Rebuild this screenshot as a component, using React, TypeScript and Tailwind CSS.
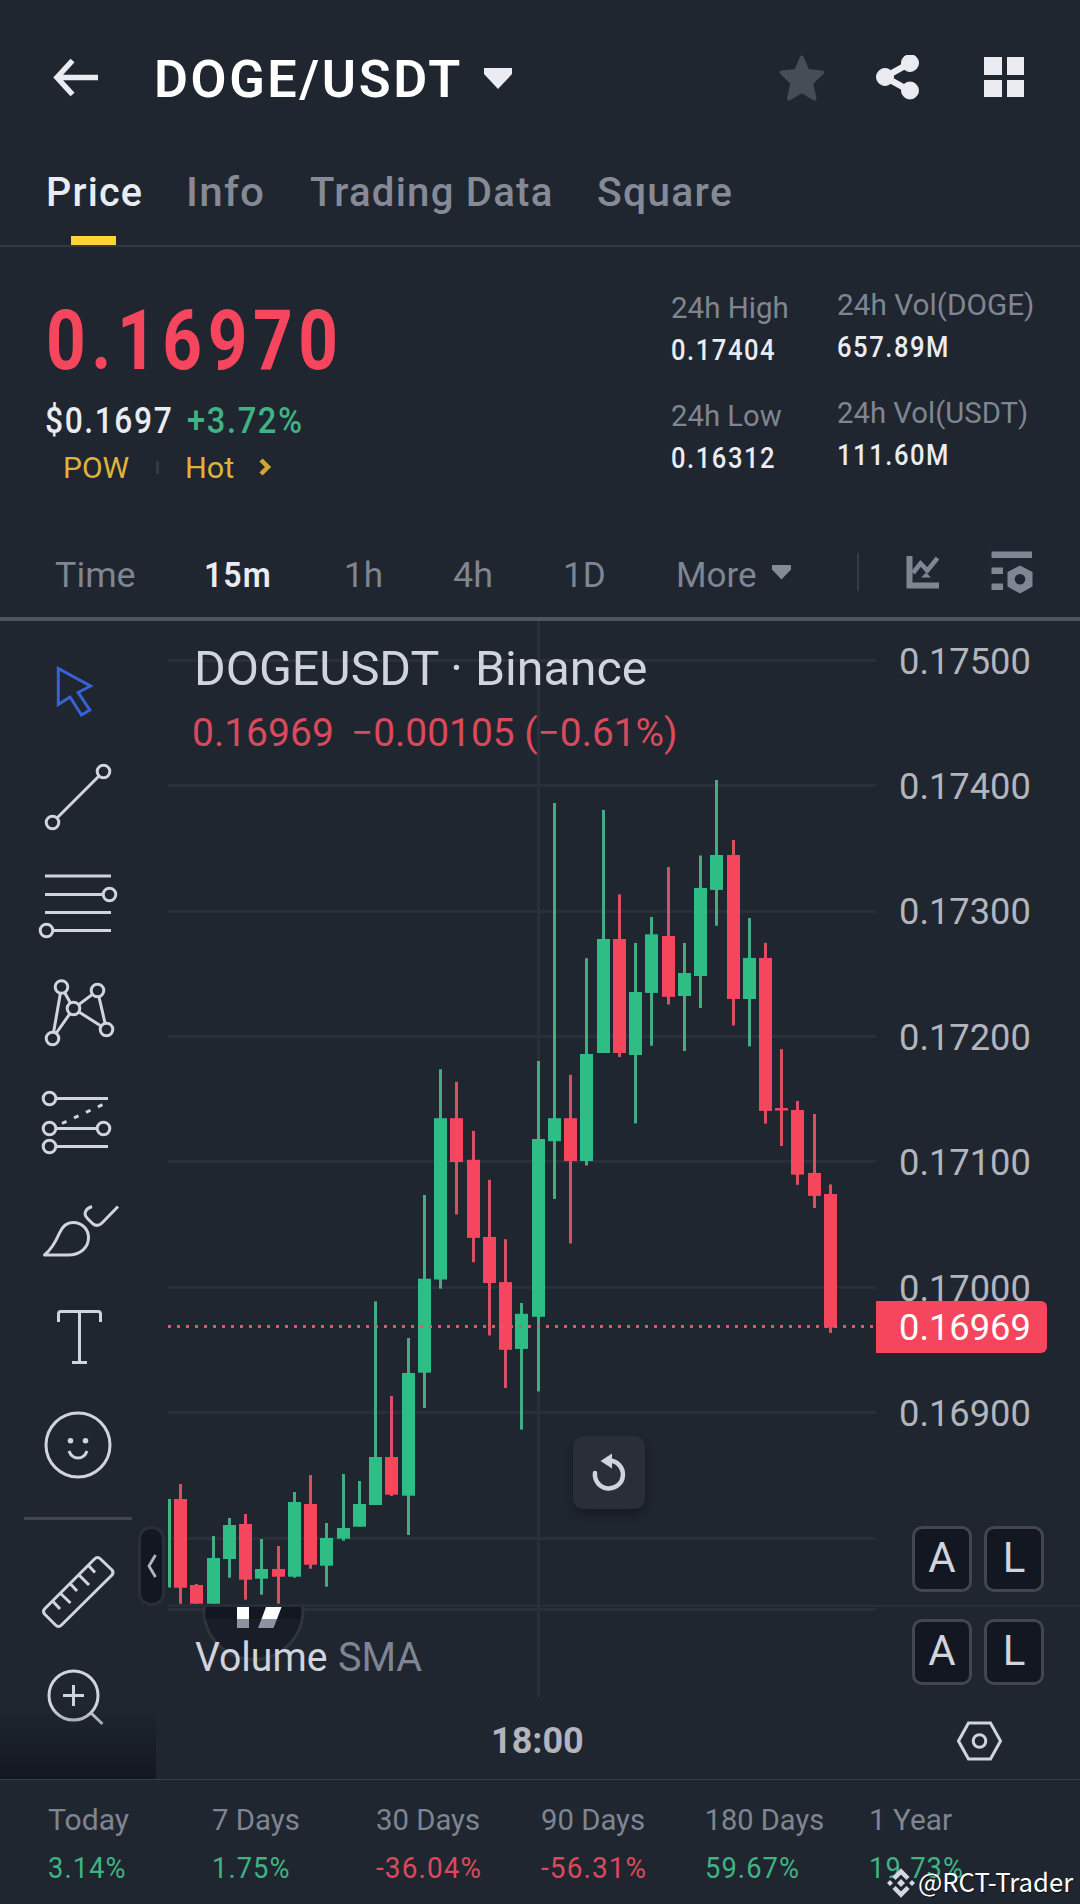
import { useLayoutEffect, useRef, useState } from "react";
import type { ReactNode } from "react";

/** Single line of text condensed or widened horizontally to an exact width. */
function Fit({ w, className = "", children }: { w: number; className?: string; children: ReactNode }) {
  const ref = useRef<HTMLSpanElement>(null);
  const [scale, setScale] = useState(1);
  useLayoutEffect(() => {
    if (ref.current) setScale(w / ref.current.offsetWidth);
  }, [w]);
  return (
    <span className={"block shrink-0 whitespace-nowrap " + className} style={{ width: w }}>
      <span ref={ref} className="inline-block origin-left" style={{ transform: `translateY(1px) scaleX(${scale})` }}>
        {children}
      </span>
    </span>
  );
}

type Candle = [x: number, high: number, top: number, bottom: number, low: number, up: 0 | 1];

const candles: Candle[] = [
  [180.5, 1484, 1499, 1587.7, 1603.7, 0],
  [196.5, 1584, 1585, 1603.7, 1603.7, 0],
  [213.5, 1536, 1558, 1603.7, 1603.7, 1],
  [229.5, 1518, 1525, 1559, 1577.7, 1],
  [245.5, 1514, 1524, 1579.7, 1599.7, 0],
  [261.5, 1539, 1569, 1578.7, 1594.7, 1],
  [278.5, 1546, 1569, 1576.7, 1603.7, 0],
  [294.5, 1492, 1502, 1576.7, 1577.7, 1],
  [310.5, 1475, 1504, 1564.7, 1568.7, 0],
  [326.5, 1523, 1538, 1565.7, 1586.7, 1],
  [343.5, 1474, 1528, 1538.7, 1540.7, 1],
  [359.5, 1481, 1504, 1526.7, 1526.7, 1],
  [375.5, 1301.3, 1457, 1505, 1505, 1],
  [391.5, 1396, 1457, 1494.7, 1496, 0],
  [408.5, 1338, 1373, 1495.7, 1535, 1],
  [424.5, 1195, 1278.7, 1372.7, 1408, 1],
  [440.5, 1069.2, 1118.2, 1279.5, 1288.6, 1],
  [456.5, 1081.8, 1118.2, 1162, 1214.5, 0],
  [473.5, 1130.8, 1159.8, 1237.9, 1262.2, 0],
  [489.5, 1179.8, 1237, 1283, 1335.5, 0],
  [505.5, 1239.2, 1282.1, 1349.8, 1388, 0],
  [521.5, 1303, 1313.8, 1348.9, 1429.6, 1],
  [538.5, 1061, 1139, 1316.8, 1391.4, 1],
  [554.5, 803, 1118.2, 1141.2, 1198.9, 1],
  [570.5, 1074.8, 1118.2, 1161.1, 1243.5, 0],
  [586.5, 958.2, 1054, 1161, 1165.5, 1],
  [603.5, 809.9, 939, 1053, 1053, 1],
  [619.5, 894.4, 939, 1053, 1057, 0],
  [635.5, 943, 992, 1055, 1123.4, 1],
  [651.5, 917, 934.3, 992.9, 1045.8, 1],
  [668.5, 867, 936, 996.8, 1004.6, 0],
  [684.5, 943, 973, 996, 1051, 1],
  [700.5, 855.5, 887.9, 976, 1008, 1],
  [716.5, 780, 855, 889.9, 925.8, 1],
  [733.5, 840, 855, 999, 1025.5, 0],
  [749.5, 918, 957.9, 999, 1046.4, 1],
  [765.5, 942.8, 957.9, 1110.9, 1123.6, 0],
  [781.5, 1049.2, 1108, 1110.5, 1146, 0],
  [797.5, 1101, 1110, 1174.6, 1184.8, 0],
  [814.5, 1114, 1173, 1195.9, 1208, 0],
  [830.5, 1184.4, 1194, 1327.6, 1333, 0],
];

const gridLines = [660.5, 785.5, 911.5, 1036.5, 1161.5, 1287.5, 1412.5, 1538.5, 1609.5];

function Header() {
  return (
    <header className="flex h-[158px] items-center pl-[52px]">
      <svg className="h-[44px] w-[48px]" viewBox="0 0 48 44" fill="none" stroke="#eaecf2" strokeWidth="5.5">
        <path d="M46 20.5H5M20.5 3.5L5 20.5L20.5 37.5" />
      </svg>
      <Fit w={309} className="ml-[54px] text-[52px] font-semibold tracking-[0.05em] text-white">DOGE/USDT</Fit>
      <svg className="ml-[21px] h-[24px] w-[28px]" viewBox="0 0 28 24" fill="#eaecf2">
        <path d="M0 1H28V7L14 22L0 7Z" />
      </svg>
      <svg className="ml-[267px] h-[48px] w-[46px]" viewBox="780 55 46 48" fill="#474d57" stroke="#474d57" strokeWidth="4" strokeLinejoin="round">
        <path d="M802.8 57.5L808.5 71L823 72.5L812 83L815.5 98.5L802.8 91L790 98.5L793.5 83L782.8 72.5L797 71Z" />
      </svg>
      <svg className="ml-[50px] h-[48px] w-[46px]" viewBox="876 55 46 48" fill="#eaecf2" stroke="#eaecf2">
        <path d="M911 63L886 77L911 91" fill="none" strokeWidth="6.5" />
        <circle cx="911" cy="63" r="8.5" />
        <circle cx="886" cy="77" r="8.5" />
        <circle cx="911" cy="90.5" r="8.5" />
      </svg>
      <div className="mb-[4px] ml-[63px] grid w-[40px] grid-cols-2 gap-[5px]">
        {[0, 1, 2, 3].map((i) => (
          <i key={i} className="h-[17.5px] w-[17.5px] bg-[#eaecf2]" />
        ))}
      </div>
    </header>
  );
}

function Tabs() {
  return (
    <nav className="flex h-[89px] border-b-2 border-[#333943] pl-[46px] text-[40px] leading-[68px] font-medium tracking-[0.03em] text-[#858a96]">
      <div className="relative">
        <Fit w={97} className="text-[#eaecf2]">Price</Fit>
        <i className="absolute bottom-0 left-[25px] h-[9px] w-[45px] bg-[#fcd535]" />
      </div>
      <Fit w={79} className="ml-[43px]">Info</Fit>
      <Fit w={244} className="ml-[45px]">Trading Data</Fit>
      <Fit w={136} className="ml-[43px]">Square</Fit>
    </nav>
  );
}

function Stat({ label, value, lw, vw }: { label: string; value: string; lw: number; vw: number }) {
  return (
    <div className="mb-[24px] text-[29px] leading-[42px]">
      <Fit w={lw} className="text-[#7f8592]">{label}</Fit>
      <Fit w={vw} className="font-medium tracking-[0.06em] text-[#eaecf2]">{value}</Fit>
    </div>
  );
}

function Summary() {
  return (
    <section className="flex h-[286px]">
      <div className="w-[671px] pt-[42px] pl-[45px]">
        <Fit w={298} className="pl-[1px] text-[84px] leading-[102px] font-bold tracking-[0.08em] text-[#f6465d]">0.16970</Fit>
        <div className="mt-[5px] flex text-[36px] leading-[48px] font-medium tracking-[0.05em]">
          <Fit w={128} className="text-[#eaecf2]">$0.1697</Fit>
          <Fit w={117} className="ml-[14px] text-[#40b384]">+3.72%</Fit>
        </div>
        <div className="mt-[3px] flex items-center pl-[18px] text-[30px] leading-[40px] text-[#deb33c]">
          <Fit w={66}>POW</Fit>
          <i className="ml-[27px] h-[13px] w-[3px] bg-[#343a45]" />
          <Fit w={49} className="ml-[26px]">Hot</Fit>
          <svg className="ml-[25px] h-[18px] w-[13px]" viewBox="0 0 13 18" fill="none" stroke="#d0a535" strokeWidth="4.5">
            <path d="M2 2L9 9L2 16" />
          </svg>
        </div>
      </div>
      <div className="w-[166px] pt-[39px]">
        <Stat label="24h High" value="0.17404" lw={118} vw={105} />
        <Stat label="24h Low" value="0.16312" lw={111} vw={105} />
      </div>
      <div className="pt-[36px]">
        <Stat label="24h Vol(DOGE)" value="657.89M" lw={197} vw={113} />
        <Stat label="24h Vol(USDT)" value="111.60M" lw={191} vw={113} />
      </div>
    </section>
  );
}

function Intervals() {
  return (
    <nav className="flex h-[88px] items-center border-b-4 border-[#4f555f] pl-[55px] text-[35px] text-[#7f8592]">
      <Fit w={81}>Time</Fit>
      <Fit w={68} className="ml-[68px] font-semibold tracking-[0.03em] text-[#eaecf2]">15m</Fit>
      <Fit w={39} className="ml-[72px]">1h</Fit>
      <Fit w={40} className="ml-[70px]">4h</Fit>
      <Fit w={43} className="ml-[70px]">1D</Fit>
      <Fit w={81} className="ml-[70px]">More</Fit>
      <svg className="mb-[6px] ml-[15px] h-[15px] w-[19px]" viewBox="0 0 19 15" fill="#858a96">
        <path d="M0 0H19V4.500L9.500 14.500L0 4.500Z" />
      </svg>
      <i className="mb-[6px] ml-[66px] h-[38px] w-[2px] bg-[#343a45]" />
      <svg className="mb-[6px] ml-[47px] h-[34px] w-[34px]" viewBox="908 555 34 34" fill="none" stroke="#7f8592">
        <path d="M911.500 556V585.500H941" strokeWidth="6" />
        <path d="M915 573L922.500 563.500L929.500 570.500L939.500 558" strokeWidth="4.500" />
        <path d="M923 577.500L928 572.500L933 577.500ZM925 569H931L928 573Z" fill="#7f8592" stroke="none" />
      </svg>
      <svg className="mb-[4px] ml-[51px] h-[44px] w-[42px]" viewBox="993 552 42 44" fill="#7f8592">
        <path d="M993.500 552.500H1034V559H993.500ZM993.500 568.500H1005V575H993.500ZM993.500 584.500H1005V591H993.500Z" />
        <path fillRule="evenodd" d="M1022 566.500L1034.500 573V587.500L1022 594.500L1009.500 587.500V573ZM1022 575A5.300 5.300 0 1 0 1022 585.600A5.300 5.300 0 1 0 1022 575Z" />
      </svg>
    </nav>
  );
}

/** One toolbar cell; `y` and `h` are the vertical slice of the drawing space it covers. */
function Tool({ y, h, children }: { y: number; h: number; children: ReactNode }) {
  return (
    <svg
      className="block shrink-0"
      width="156"
      height={h}
      viewBox={`0 ${y} 156 ${h}`}
      fill="none"
      stroke="#d1d4dc"
      strokeWidth="3"
    >
      {children}
    </svg>
  );
}

function Dots({ at }: { at: [number, number][] }) {
  return (
    <>
      {at.map(([x, y]) => (
        <circle key={`${x}-${y}`} cx={x} cy={y} r="6.3" fill="#1f262f" />
      ))}
    </>
  );
}

function Toolbar() {
  return (
    <aside className="flex w-[168px] shrink-0 flex-col">
      <Tool y={621} h={119}>
        <path d="M58.300 668.500V704.500L70 697L81.500 715L89.800 710L78.200 692.500L90.500 686Z" stroke="#3a62d8" />
      </Tool>
      <Tool y={740} h={110}>
        <path d="M52.500 822.500L103.500 771.500" />
        <Dots at={[[52.5, 822.5], [103.5, 771.5]]} />
      </Tool>
      <Tool y={850} h={110}>
        <path d="M45 876H111M45 894.500H106M45 912.500H111M50 930.500H111" />
        <Dots at={[[109.5, 894.5], [46.5, 930.5]]} />
      </Tool>
      <Tool y={960} h={110}>
        <path d="M61.500 987L52.500 1038.500L73.500 1008.500L97.500 990.500L106.500 1029.500L73.500 1008.500Z" />
        <Dots at={[[61.5, 987], [97.5, 990.5], [73.5, 1008.5], [52.5, 1038.5], [106.5, 1029.5]]} />
      </Tool>
      <Tool y={1070} h={110}>
        <path d="M50 1098.500H108M50 1128.500H103M50 1146.500H108" />
        <path d="M62 1123.500L105 1103.500" strokeDasharray="5 8.200" />
        <Dots at={[[49.5, 1098.5], [49.5, 1128.5], [103.5, 1128.5], [49.5, 1146.5]]} />
      </Tool>
      <Tool y={1180} h={104}>
        <path strokeLinejoin="round" d="M44.500 1255C52 1249 56 1241 59.500 1233C62.500 1226 67 1222.500 73 1222.500C82 1222.500 88.500 1229 88.500 1237.500C88.500 1247 81 1255 68 1255Z" />
        <path d="M92 1206.500C86 1208.500 82.500 1213.500 87.500 1218.500L92.500 1223.500C95.500 1226 99 1226 102 1223L118 1206.500" />
      </Tool>
      <Tool y={1284} h={106}>
        <path d="M58.500 1322V1314Q58.500 1311.500 61 1311.500H98Q100.500 1311.500 100.500 1314V1322M79.500 1311.500V1362.500M72 1362.500H87" />
      </Tool>
      <Tool y={1390} h={110}>
        <circle cx="78" cy="1445" r="32" />
        <path d="M69 1451Q71.500 1458 78 1458Q84.500 1458 87 1451" />
        <circle cx="70.500" cy="1440.700" r="2.800" fill="#d1d4dc" stroke="none" />
        <circle cx="85.500" cy="1440.700" r="2.800" fill="#d1d4dc" stroke="none" />
      </Tool>
      <i className="mt-[17px] ml-[24px] h-[3px] w-[108px] shrink-0 bg-[#434651]" />
      <Tool y={1520} h={130}>
        <path strokeLinejoin="round" d="M94.500 1559Q97.500 1556 100.500 1559L112 1570Q114 1572.500 112 1575L61.500 1625Q58.500 1628 55.500 1625L44.500 1614Q42.500 1611.500 44.500 1609Z" />
        <path d="M53 1601.500L60 1609M60.500 1593.500L70.500 1603M70.500 1584L77 1591M79 1575L89 1585M88.500 1565.500L95 1572.500" />
      </Tool>
      <div className="w-[156px] grow">
        <Tool y={1650} h={129}>
          <circle cx="73.500" cy="1695.500" r="24.500" />
          <path d="M63 1695.500H84M73.500 1685V1706M91 1713L102.500 1724" />
          <defs>
            <linearGradient id="fade" x1="0" y1="0" x2="0" y2="1">
              <stop offset="0" stopColor="#131722" stopOpacity="0" />
              <stop offset="1" stopColor="#131722" />
            </linearGradient>
          </defs>
          <rect x="0" y="1707" width="156" height="72" fill="url(#fade)" stroke="none" />
        </Tool>
      </div>
    </aside>
  );
}

function Plot() {
  return (
    <svg className="block h-[1079px] w-[708px]" viewBox="168 621 708 1079">
      <g stroke="#2a303b" strokeWidth="3">
        {gridLines.map((y) => (
          <path key={y} d={`M168 ${y}H876`} />
        ))}
        <path d="M538.500 621V1697" />
      </g>
      <path d="M168 1605.500H876" stroke="#2a303b" strokeWidth="2" />
      <rect x="168" y="1499" width="3" height="88.500" fill="#40b384" />
      {candles.map(([x, high, top, bottom, low, up]) => (
        <g key={x}>
          <rect x={x - 1.5} y={high} width="3" height={low - high} fill={up ? "#43ac82" : "#d94f64"} />
          <rect x={x - 6.5} y={top} width="13" height={bottom - top} fill={up ? "#2ebd85" : "#f6465d"} />
        </g>
      ))}
      <path d="M168 1326.500H876" stroke="#d95a6c" strokeWidth="3" strokeDasharray="3 6" />
      <clipPath id="pane">
        <rect x="168" y="1607" width="200" height="93" />
      </clipPath>
      <g clipPath="url(#pane)">
        <circle cx="253.500" cy="1610" r="49.500" fill="#181d28" stroke="#2f343f" strokeWidth="3" />
        <path d="M206 1607H301V1619H205Z" fill="#131722" />
        <path d="M237 1607H249V1619H237ZM266 1607H281.500L277 1619H261.500Z" fill="#fff" />
        <path d="M237 1619H249V1628H237ZM261.500 1619H277L273.500 1628H258Z" fill="#8f93a0" />
      </g>
    </svg>
  );
}

function AxisButtons() {
  return (
    <div className="flex gap-[12px] pl-[36px]">
      {["A", "L"].map((t) => (
        <span key={t} className="flex h-[66px] w-[60px] items-center justify-center rounded-[10px] border-3 border-[#434651] bg-[#131722] pb-[2px] text-[42px] text-[#d1d4dc]">
          {t}
        </span>
      ))}
    </div>
  );
}

function PriceAxis() {
  return (
    <div className="relative h-[1079px] w-[204px]">
      <div className="-mt-[23px]">
        {["0.17500", "0.17400", "0.17300", "0.17200", "0.17100", "0.17000", "0.16900"].map((p) => (
          <div key={p} className="flex h-[125.400px] items-center pl-[23px] text-[36px] text-[#b2b5be]">
            <Fit w={132}>{p}</Fit>
          </div>
        ))}
      </div>
      <div className="mt-[50px]">
        <AxisButtons />
      </div>
      <div className="mt-[13px] mb-[12px] h-[2px] bg-[#2a303b]" />
      <AxisButtons />
      <div className="absolute top-[680px] left-0 flex h-[52px] w-[171px] items-center rounded-r-[6px] bg-[#f6465d] pl-[23px] text-[36px] text-white">
        <Fit w={132}>0.16969</Fit>
      </div>
    </div>
  );
}

function Chart() {
  return (
    <section className="relative flex h-[1158px] overflow-hidden">
      <Toolbar />
      <div className="relative w-[912px]">
        <div className="flex">
          <Plot />
          <PriceAxis />
        </div>
        <div className="flex h-[79px] items-start text-[36px] font-bold text-[#b2b5be]">
          <Fit w={93} className="ml-[323px] pt-[13px]">18:00</Fit>
          <svg className="mt-[19px] ml-[373px] h-[44px] w-[46px]" viewBox="957 1719 46 44" fill="none" stroke="#d1d4dc" strokeWidth="3">
            <path d="M968.500 1723H990.500L1000.500 1741L990.500 1759H968.500L958.500 1741Z" />
            <circle cx="979.500" cy="1741" r="6.300" />
          </svg>
        </div>
        <div className="absolute top-[19px] left-[25px] text-[#d1d4dc]">
          <Fit w={453} className="pl-[1px] text-[48px] leading-[56px]">DOGEUSDT · Binance</Fit>
          <div className="mt-[12px] flex text-[39px] leading-[48px] text-[#d94a5c]">
            <Fit w={142} className="-ml-[1px]">0.16969</Fit>
            <Fit w={327} className="ml-[17px]">−0.00105 (−0.61%)</Fit>
          </div>
        </div>
        <div className="absolute top-[1012px] left-[27px] flex text-[40px] leading-[48px]">
          <Fit w={132} className="text-[#d1d4dc]">Volume</Fit>
          <Fit w={84} className="ml-[11px] text-[#7f8592]">SMA</Fit>
        </div>
        <div className="absolute top-[815px] left-[405px] flex h-[73px] w-[72px] items-center justify-center rounded-[10px] bg-[#2a2e39] shadow-[0_6px_9px_rgba(12,14,22,0.45)]">
          <svg className="h-[44px] w-[44px]" viewBox="587 1451 44 44" fill="none" stroke="#d1d4dc" strokeWidth="4.500">
            <path d="M595 1473A14 14 0 1 0 609 1460.500" strokeLinecap="round" />
            <path d="M600.500 1461L612 1453.500V1468.500Z" fill="#d1d4dc" stroke="none" />
          </svg>
        </div>
      </div>
      <div className="absolute top-[905px] left-[138px] flex h-[80px] w-[27px] items-center justify-center rounded-[13px] border-3 border-[#2a2e39] bg-[#131722]">
        <svg className="h-[26px] w-[12px]" viewBox="0 0 12 26" fill="none" stroke="#b2b5be" strokeWidth="2.800">
          <path d="M9.500 2L3 13L9.500 24" />
        </svg>
      </div>
    </section>
  );
}

const periods = [
  { label: "Today", value: "3.14%", lw: 81, vw: 79 },
  { label: "7 Days", value: "1.75%", lw: 88, vw: 79 },
  { label: "30 Days", value: "-36.04%", lw: 104, vw: 106 },
  { label: "90 Days", value: "-56.31%", lw: 104, vw: 106 },
  { label: "180 Days", value: "59.67%", lw: 119, vw: 95 },
  { label: "1 Year", value: "19.73%", lw: 83, vw: 95 },
];

function Footer() {
  return (
    <footer className="relative flex h-[125px] border-t border-[#383e48] pt-[15px] pl-[48px] text-[29px] leading-[48px]">
      {periods.map((p) => (
        <div key={p.label} className="w-[164.200px] shrink-0">
          <Fit w={p.lw} className="text-[#7f8592]">{p.label}</Fit>
          <Fit w={p.vw} className={p.value.startsWith("-") ? "tracking-[0.04em] text-[#d94a5c]" : "tracking-[0.04em] text-[#40b384]"}>{p.value}</Fit>
        </div>
      ))}
      <div className="absolute top-[80px] left-[887px] flex items-center font-['Noto_Sans_CJK_SC',sans-serif] text-[26px] leading-[40px] text-white">
        <svg className="h-[30px] w-[28px]" viewBox="0 0 28 30" fill="none" stroke="#d5d8e0" strokeWidth="4.500">
          <path d="M7 10.500L14 3.500L21 10.500M7 19.500L14 26.500L21 19.500" />
          <path d="M14 11L18 15L14 19L10 15ZM3 12L6 15L3 18L0 15ZM25 12L28 15L25 18L22 15Z" fill="#d5d8e0" stroke="none" />
        </svg>
        <Fit w={155} className="mb-[5px] ml-[3px] [text-shadow:1px_1px_1px_rgba(0,0,0,0.5)]">@RCT-Trader</Fit>
      </div>
    </footer>
  );
}

export default function App() {
  return (
    <main className="h-[1904px] w-[1080px] overflow-hidden bg-[#1f262f] font-['Roboto',sans-serif]">
      <Header />
      <Tabs />
      <Summary />
      <Intervals />
      <Chart />
      <Footer />
    </main>
  );
}
